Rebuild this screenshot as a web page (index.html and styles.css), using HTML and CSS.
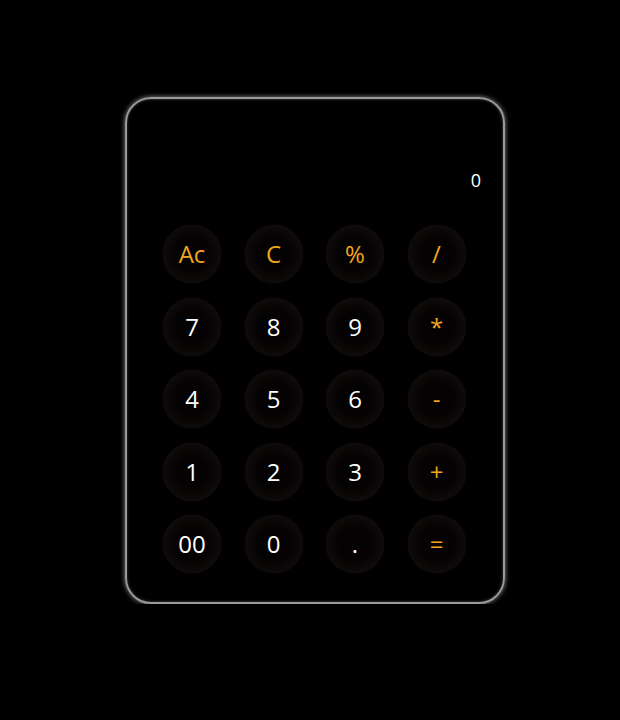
FILE: index.html
```html
<!DOCTYPE html>
<html lang="en">
<head>
<meta charset="utf-8">
<title>Calculator</title>
<link rel="stylesheet" href="styles.css">
</head>
<body>
<div class="calc">
  <div class="display">0</div>
  <div class="keys">
    <button class="key op">Ac</button>
    <button class="key op">C</button>
    <button class="key op">%</button>
    <button class="key op">/</button>
    <button class="key">7</button>
    <button class="key">8</button>
    <button class="key">9</button>
    <button class="key op">*</button>
    <button class="key">4</button>
    <button class="key">5</button>
    <button class="key">6</button>
    <button class="key op">-</button>
    <button class="key">1</button>
    <button class="key">2</button>
    <button class="key">3</button>
    <button class="key op">+</button>
    <button class="key">00</button>
    <button class="key">0</button>
    <button class="key">.</button>
    <button class="key op">=</button>
  </div>
</div>
</body>
</html>
```
FILE: styles.css
```css
html, body {
  margin: 0;
  padding: 0;
  background: #000;
}
body {
  font-family: "Open Sans", "Noto Sans", sans-serif;
  padding-top: 97px;
  padding-left: 125px;
}
.calc {
  box-sizing: border-box;
  width: 380px;
  height: 507px;
  border: 2px solid #9a9a9a;
  border-radius: 26px;
  box-shadow: 0 0 5px rgba(255, 255, 255, 0.55), inset 0 0 3px rgba(255, 255, 255, 0.3);
  padding: 0 0 0 36px;
}
.display {
  box-sizing: border-box;
  height: 126px;
  padding-top: 69px;
  padding-right: 22px;
  text-align: right;
  color: #fff;
  font-size: 18px;
  line-height: 24px;
}
.keys {
  display: grid;
  grid-template-columns: repeat(4, 58px);
  grid-auto-rows: 58px;
  column-gap: 23.5px;
  row-gap: 14.5px;
}
.key {
  width: 58px;
  height: 58px;
  border-radius: 50%;
  border: none;
  padding: 0;
  margin: 0;
  background: radial-gradient(circle, #040202 40%, #120c0c 75%, #231919 94%, #2c2020 100%);
  box-shadow: 0 0 1px rgba(130, 100, 95, 0.4);
  color: #fff;
  font-family: "Open Sans", "Noto Sans", sans-serif;
  font-size: 24px;
  line-height: 58px;
}
.key.op {
  color: #f2a51f;
}
```
